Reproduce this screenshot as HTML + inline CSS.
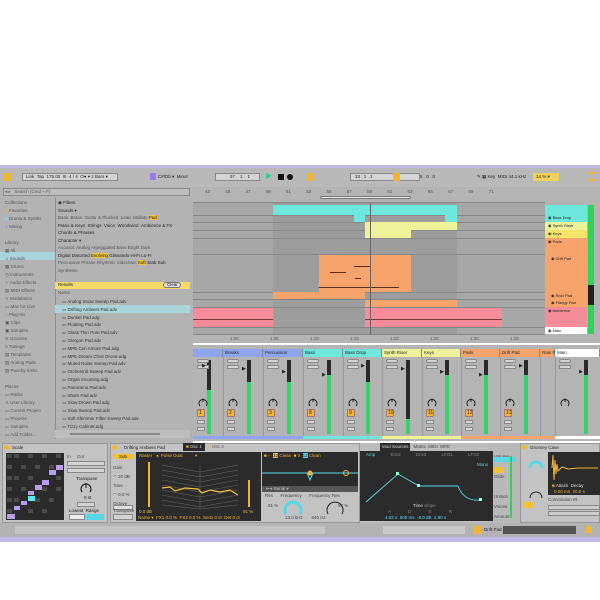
<!DOCTYPE html>
<html><head><meta charset="utf-8"><style>
*{margin:0;padding:0;box-sizing:border-box}
body{width:600px;height:600px;background:#fff;position:relative;overflow:hidden;font-family:"Liberation Sans",sans-serif;font-size:4.5px;color:#222}
.a{position:absolute}
.t{position:absolute;white-space:nowrap;line-height:1}
.bx{position:absolute;background:#d4d4d4;border:1px solid #8a8a8a}
</style></head><body>
<!-- frame -->
<div class="a" style="left:0;top:165px;width:600px;height:3px;background:#c3b9e8"></div>
<div class="a" style="left:0;top:537px;width:600px;height:5px;background:#c3b9e8"></div>
<!-- toolbar -->
<div class="a" style="left:0;top:168px;width:600px;height:19px;background:#b9b9b9"></div>
<div class="a" style="left:4px;top:173px;width:8px;height:8px;background:#f2b632"></div>
<div class="bx" style="left:22px;top:173px;width:96px;height:8px"></div>
<div class="t" style="left:26px;top:175px">Link &nbsp;Tap &nbsp;175.00 &nbsp;III &nbsp;4 / 4 &nbsp;O● ▾ 2 Bars ▾</div>
<div class="a" style="left:150px;top:173px;width:6px;height:7px;background:#9a7cf0"></div>
<div class="t" style="left:158px;top:175px">C#/Db ▾ &nbsp;Minor</div>
<div class="bx" style="left:215px;top:173px;width:45px;height:8px"></div>
<div class="t" style="left:230px;top:175px">57 . &nbsp;1 . &nbsp;1</div>
<div class="t" style="left:266px;top:172px;color:#2ed28a;font-size:8px">▶</div>
<div class="a" style="left:278px;top:174px;width:6px;height:6px;background:#111"></div>
<div class="a" style="left:287px;top:174px;width:6px;height:6px;background:#111;border-radius:50%"></div>
<div class="a" style="left:308px;top:173px;width:6px;height:8px;background:#f2b632"></div>
<div class="bx" style="left:350px;top:173px;width:70px;height:8px"></div>
<div class="t" style="left:355px;top:175px">33 . 1 . 1</div>
<div class="a" style="left:393px;top:173px;width:7px;height:8px;background:#f2b632"></div>
<div class="t" style="left:420px;top:175px">5 . 0 . 0</div>
<div class="t" style="left:477px;top:175px">✎ ▦ Key &nbsp;MIDI 44.1 kHz</div>
<div class="a" style="left:533px;top:173px;width:26px;height:8px;background:#f0d25a"></div>
<div class="t" style="left:536px;top:175px">14 % ▾</div>
<div class="a" style="left:587px;top:172px;width:8px;height:9px;border-top:2px solid #f2b632;border-bottom:2px solid #f2b632"></div>
<!-- left sidebar + browser -->
<div class="a" style="left:0;top:187px;width:193px;height:256px;background:#b3b3b3"></div>
<div class="bx" style="left:3px;top:188px;width:187px;height:8px;background:#bdbdbd"></div>
<div class="t" style="left:5px;top:190px;color:#555">◂ ▸ &nbsp;&nbsp;Search (Cmd + F)</div>
<div class="a" style="left:55px;top:197px;width:1px;height:242px;background:#8e8e8e"></div>
<div class="a" style="left:0;top:252px;width:55px;height:8px;background:#a9d4dc"></div>
<div class="t" style="left:5px;top:199px;color:#555;line-height:8px">Collections<br><span style="color:#f2b632">■</span> Favorites<br><span style="color:#5ed">■</span> Drums &amp; Synths<br><span style="color:#a8e">■</span> Mixing<br><br>Library<br>▦ All<br>♫ Sounds<br>▦ Drums<br>◷ Instruments<br>⊹ Audio Effects<br>▤ MIDI Effects<br>∿ Modulators<br>▭ Max for Live<br>◌ Plug-Ins<br>▣ Clips<br>▣ Samples<br>≋ Grooves<br>≡ Tunings<br>▤ Templates<br>▥ Analog Pads<br>▥ Punchy Kicks<br><br>Places<br>▭ Packs<br>♙ User Library<br>▭ Current Project<br>▭ Projects<br>▭ Samples<br>▭ Add Folder...</div>
<div class="t" style="left:58px;top:199px;line-height:7.5px">◉ Filters<br>Sounds ▾<br><span style="color:#555">Bass &nbsp;Brass &nbsp;Guitar &amp; Plucked &nbsp;Lead &nbsp;Mallets </span><span style="background:#f2c232">Pad</span><br>Piano &amp; Keys &nbsp;Strings &nbsp;Voice &nbsp;Woodwind &nbsp;Ambience &amp; FX<br>Chords &amp; Phrases<br>Character ▾<br><span style="color:#555">Acoustic Analog Arpeggiated Bass Bright Dark</span><br>Digital Distorted <span style="background:#f2c232">Evolving</span> Glissando Hi-Fi Lo-Fi<br><span style="color:#555">Percussive Phrase Rhythmic Sidechain </span><span style="background:#f2c232">Soft</span> Stab Sub<br><span style="color:#555">Synthesis</span><br><br>Genres ▾</div>
<div class="a" style="left:55px;top:282px;width:135px;height:7px;background:#f5da6a"></div>
<div class="t" style="left:58px;top:283px">Results</div>
<div class="a" style="left:163px;top:282px;width:18px;height:6px;border:1px solid #777;border-radius:3px;background:#ddd"></div>
<div class="t" style="left:167px;top:283px">Clear</div>
<div class="t" style="left:58px;top:291px;color:#555">Name</div>
<div class="a" style="left:55px;top:305px;width:135px;height:8px;background:#a9d4dc"></div>
<div class="t" style="left:62px;top:298px;line-height:7.8px;color:#333">▭ Analog Snow Sweep Pad.adv<br>▭ Drifting Ambient Pad.adv<br>▭ Dunkel Pad.adg<br>▭ Floating Pad.adv<br>▭ Glass Thin Pure Pad.adv<br>▭ Glorgon Pad.adv<br>▭ MPE Con Amore Pad.adg<br>▭ MPE Dream Choir Drone.adg<br>▭ Muted Noise Sweep Pad.adv<br>▭ Orchestral Sweep Pad.adv<br>▭ Organ Incoming.adg<br>▭ Panorama Pad.adv<br>▭ Sham Pad.adv<br>▭ Slow Drown Pad.adg<br>▭ Slow Swoop Pad.adv<br>▭ Soft Shimmer Filter Sweep Pad.adv<br>▭ Tizzy Cabinet.adg</div>
<div class="a" style="left:55px;top:430px;width:135px;height:8px;background:#bdbdbd"></div>
<div class="a" style="left:70px;top:433px;width:90px;height:2px;background:#888"></div>
<!-- arrangement -->
<div class="a" style="left:193px;top:187px;width:352px;height:156px;background:#a7a7a7"></div>
<div class="a" style="left:193px;top:187px;width:352px;height:16px;background:#b4b4b4;border-bottom:1px solid #888"></div>
<div class="t" style="left:205px;top:190px;color:#555;word-spacing:14px">43 45 47 49 51 53 55 57 59 61 63 65 67 69 71</div>
<div class="a" style="left:320px;top:196px;width:91px;height:3px;border:1px solid #777;border-radius:2px;background:#eee"></div>
<div class="a" style="left:273px;top:203px;width:184px;height:132px;background:#9d9d9d"></div>
<div class="a" style="left:193px;top:215px;width:352px;height:1px;background:#888"></div>
<div class="a" style="left:193px;top:222px;width:352px;height:1px;background:#888"></div>
<div class="a" style="left:193px;top:230px;width:352px;height:1px;background:#888"></div>
<div class="a" style="left:193px;top:238px;width:352px;height:1px;background:#888"></div>
<div class="a" style="left:193px;top:254px;width:352px;height:1px;background:#888"></div>
<div class="a" style="left:193px;top:292px;width:352px;height:1px;background:#888"></div>
<div class="a" style="left:193px;top:299px;width:352px;height:1px;background:#888"></div>
<div class="a" style="left:193px;top:307px;width:352px;height:1px;background:#888"></div>
<div class="a" style="left:193px;top:327px;width:352px;height:1px;background:#888"></div>
<div class="a" style="left:193px;top:334px;width:352px;height:9px;background:#b4b4b4;border-top:1px solid #888"></div>
<div class="t" style="left:230px;top:337px;color:#555;word-spacing:30px">1:00 1:05 1:10 1:15 1:20 1:25 1:30 1:35</div>
<div class="a" style="left:273px;top:205px;width:184px;height:10px;background:#6ee8dd"></div>
<div class="a" style="left:354px;top:215px;width:11px;height:7px;background:#6ee8dd"></div>
<div class="a" style="left:445px;top:215px;width:12px;height:7px;background:#6ee8dd"></div>
<div class="a" style="left:365px;top:222px;width:92px;height:8px;background:#eef39a"></div>
<div class="a" style="left:365px;top:230px;width:46px;height:8px;background:#eef39a"></div>
<div class="a" style="left:319px;top:255px;width:92px;height:37px;background:#f6a46c"></div>
<div class="a" style="left:330px;top:272px;width:16px;height:1px;background:#5a3018"></div>
<div class="a" style="left:354px;top:266px;width:16px;height:1px;background:#5a3018"></div>
<div class="a" style="left:355px;top:278px;width:6px;height:1px;background:#5a3018"></div>
<div class="a" style="left:319px;top:287px;width:80px;height:1px;background:#5a3018"></div>
<div class="a" style="left:273px;top:292px;width:92px;height:7px;background:#f6a46c"></div>
<div class="a" style="left:365px;top:300px;width:92px;height:7px;background:#f6a46c"></div>
<div class="a" style="left:193px;top:308px;width:80px;height:19px;background:#f58c9a"></div>
<div class="a" style="left:365px;top:308px;width:137px;height:19px;background:#f58c9a"></div>
<div class="a" style="left:193px;top:319px;width:80px;height:1px;background:#7a3a40"></div>
<div class="a" style="left:365px;top:319px;width:137px;height:1px;background:#7a3a40"></div>
<div class="a" style="left:370px;top:203px;width:1px;height:132px;background:#666"></div>
<!-- track headers -->
<div class="a" style="left:545px;top:187px;width:55px;height:156px;background:#b4b4b4"></div>
<div class="a" style="left:545px;top:205px;width:42px;height:10px;background:#6ee8dd"></div>
<div class="a" style="left:545px;top:215px;width:42px;height:7px;background:#6ee8dd"></div>
<div class="a" style="left:545px;top:222px;width:42px;height:8px;background:#eef39a"></div>
<div class="a" style="left:545px;top:230px;width:42px;height:8px;background:#f2e56a"></div>
<div class="a" style="left:545px;top:238px;width:42px;height:16px;background:#f6a46c"></div>
<div class="a" style="left:545px;top:254px;width:42px;height:38px;background:#f6a46c"></div>
<div class="a" style="left:545px;top:292px;width:42px;height:7px;background:#f6a46c"></div>
<div class="a" style="left:545px;top:299px;width:42px;height:8px;background:#f6a46c"></div>
<div class="a" style="left:545px;top:307px;width:42px;height:20px;background:#f58c9a"></div>
<div class="a" style="left:545px;top:327px;width:42px;height:7px;background:#fff"></div>
<div class="t" style="left:548px;top:216px;font-size:4px">◉ Bass Drop</div>
<div class="t" style="left:548px;top:224px;font-size:4px">◉ Synth Riser</div>
<div class="t" style="left:548px;top:232px;font-size:4px">◉ Keys</div>
<div class="t" style="left:548px;top:240px;font-size:4px">◉ Pads</div>
<div class="t" style="left:551px;top:257px;font-size:4px">◉ Drift Pad</div>
<div class="t" style="left:551px;top:294px;font-size:4px">◉ Rain Pad</div>
<div class="t" style="left:551px;top:301px;font-size:4px">◉ Flangy Pad</div>
<div class="t" style="left:548px;top:309px;font-size:4px">◉ Ambience</div>
<div class="t" style="left:548px;top:329px;font-size:4px">◉ Main</div>
<div class="a" style="left:588px;top:205px;width:6px;height:129px;background:#2fd35a"></div>
<div class="a" style="left:588px;top:285px;width:6px;height:20px;background:#222"></div>
<!-- mixer -->
<div class="a" style="left:193px;top:345px;width:407px;height:96px;background:#b4b4b4"></div>
<div id="mx"></div>
<!-- devices -->
<div class="a" style="left:0;top:443px;width:600px;height:80px;background:#b9b9b9"></div>
<div class="a" style="left:2px;top:443px;width:106px;height:80px;background:#c3c3c3;border:1px solid #999"></div>
<div class="a" style="left:4px;top:445px;width:5px;height:5px;border-radius:50%;background:#f2b632"></div>
<div class="t" style="left:12px;top:446px">Scale</div>
<div class="a" style="left:6px;top:453px;width:58px;height:67px;background:#2a2a2a"></div>
<svg class="a" style="left:6px;top:453px" width="58" height="67">
<g fill="#4a4a4a">
<rect x="1" y="1" width="5" height="4"/><rect x="8" y="1" width="5" height="4"/><rect x="22" y="1" width="5" height="4"/><rect x="36" y="1" width="5" height="4"/><rect x="50" y="1" width="5" height="4"/>
<rect x="1" y="12" width="5" height="4"/><rect x="15" y="12" width="5" height="4"/><rect x="29" y="12" width="5" height="4"/><rect x="43" y="12" width="5" height="4"/>
<rect x="1" y="23" width="5" height="4"/><rect x="8" y="23" width="5" height="4"/><rect x="22" y="23" width="5" height="4"/><rect x="50" y="23" width="5" height="4"/>
<rect x="1" y="34" width="5" height="4"/><rect x="15" y="34" width="5" height="4"/><rect x="36" y="34" width="5" height="4"/><rect x="50" y="34" width="5" height="4"/>
<rect x="1" y="45" width="5" height="4"/><rect x="8" y="45" width="5" height="4"/><rect x="29" y="45" width="5" height="4"/><rect x="43" y="45" width="5" height="4"/>
<rect x="1" y="56" width="5" height="4"/><rect x="22" y="56" width="5" height="4"/><rect x="36" y="56" width="5" height="4"/>
</g>
<g fill="#b79cf2"><rect x="50" y="12" width="7" height="5"/><rect x="43" y="17" width="7" height="5"/><rect x="36" y="27" width="7" height="5"/><rect x="29" y="32" width="7" height="5"/><rect x="22" y="38" width="6" height="4"/><rect x="15" y="48" width="6" height="4"/><rect x="8" y="53" width="6" height="4"/><rect x="1" y="61" width="8" height="5"/></g>
<rect x="22" y="43" width="7" height="5" fill="#5ee5f0"/>
</svg>
<div class="t" style="left:67px;top:455px;color:#555">In &nbsp;&nbsp;&nbsp;&nbsp;Out</div>
<div class="bx" style="left:67px;top:461px;width:38px;height:5px"></div>
<div class="bx" style="left:67px;top:468px;width:38px;height:5px"></div>
<div class="t" style="left:76px;top:477px">Transpose</div>
<svg class="a" style="left:79px;top:482px" width="14" height="12"><path d="M3 10 A5 5 0 1 1 11 10" fill="none" stroke="#222" stroke-width="1.2"/><line x1="7" y1="6" x2="7" y2="1" stroke="#222"/></svg>
<div class="t" style="left:84px;top:496px">0 st</div>
<div class="bx" style="left:77px;top:502px;width:18px;height:5px"></div>
<div class="t" style="left:69px;top:509px">Lowest &nbsp;Range</div>
<div class="bx" style="left:69px;top:514px;width:16px;height:6px;background:#eee"></div>
<div class="a" style="left:86px;top:514px;width:18px;height:6px;background:#55d8e8"></div>
<!-- synth device -->
<div class="a" style="left:110px;top:443px;width:250px;height:80px;background:#c3c3c3;border:1px solid #999"></div>
<div class="a" style="left:112px;top:445px;width:5px;height:5px;border-radius:50%;background:#f2b632"></div>
<div class="t" style="left:124px;top:446px">Drifting Ambient Pad</div>
<div class="a" style="left:183px;top:443px;width:22px;height:8px;background:#2a2a2a"></div>
<div class="t" style="left:186px;top:445px;color:#ddd"><span style="color:#f2b632">■</span> Osc 1</div>
<div class="t" style="left:208px;top:445px;color:#555"><span style="color:#f2b632">□</span> Osc 2</div>
<div class="a" style="left:113px;top:454px;width:20px;height:5px;background:#f2c232"></div>
<div class="t" style="left:119px;top:455px">Sub</div>
<div class="t" style="left:113px;top:463px;line-height:9px;color:#444">Gain<br>◠ 20 dB<br>Tone<br>◠ 0.0 %<br>Octave</div>
<div class="a" style="left:113px;top:505px;width:20px;height:5px;background:#ddd;border:1px solid #888"></div>
<div class="t" style="left:113px;top:509px;color:#444">Transpose</div>
<div class="bx" style="left:113px;top:514px;width:20px;height:6px"></div>
<div class="a" style="left:136px;top:452px;width:125px;height:69px;background:#2b2b2b"></div>
<div class="t" style="left:139px;top:454px;color:#f2b632">Raster &nbsp;&nbsp;◂ &nbsp;Pulse Dual &nbsp;&nbsp;&nbsp;&nbsp;&nbsp;&nbsp;&nbsp;&nbsp;&nbsp;▾</div>
<div class="a" style="left:148px;top:462px;width:2px;height:45px;background:#f2b632"></div>
<div class="a" style="left:248px;top:480px;width:2px;height:27px;background:#f2b632"></div>
<svg class="a" style="left:160px;top:460px" width="80" height="50">
<g stroke="#777" stroke-width=".4" fill="none">
<path d="M2 5 L40 12 L78 5"/><path d="M2 10 L40 17 L78 10"/><path d="M2 15 L40 22 L78 15"/><path d="M2 20 L40 27 L78 20"/><path d="M2 25 L40 32 L78 25"/><path d="M2 30 L40 37 L78 30"/><path d="M2 35 L40 42 L78 35"/><path d="M2 40 L40 47 L78 40"/><path d="M2 45 L40 49 L78 45"/><line x1="40" y1="5" x2="40" y2="49"/></g>
<path d="M2 28 L10 27 L15 31 L25 28 L38 29 L42 33 L50 30 L60 32 L70 30 L78 35" stroke="#f2c232" stroke-width="1.2" fill="none"/>
</svg>
<div class="t" style="left:139px;top:510px;color:#f2b632">0.0 dB</div>
<div class="t" style="left:243px;top:510px;color:#f2b632">51 %</div>
<div class="t" style="left:138px;top:516px;color:#f2b632">Name ▾ &nbsp;FX1 0.0 % &nbsp;FX2 0.0 % &nbsp;Semi 0 st &nbsp;Det 0 ct</div>
<div class="a" style="left:262px;top:452px;width:96px;height:34px;background:#2b2b2b"></div>
<div class="t" style="left:264px;top:454px;color:#f2b632">■ ⌐ &nbsp;<span style="background:#f2b632;color:#222">12</span> Clean &nbsp;■ \/ &nbsp;<span style="background:#55d8e8;color:#222">12</span> Clean</div>
<svg class="a" style="left:262px;top:462px" width="96" height="24"><path d="M0 11 L45 11 L48 18 L51 11 L96 11" stroke="#55d8e8" fill="none" stroke-width="1"/><circle cx="48" cy="11" r="2.5" fill="#f2b632"/><circle cx="84" cy="11" r="2.5" fill="none" stroke="#f2b632"/></svg>
<div class="a" style="left:262px;top:486px;width:96px;height:6px;background:#555"></div>
<div class="t" style="left:266px;top:487px;color:#ccc">⟷ Serial ▾</div>
<div class="t" style="left:265px;top:494px;color:#444">Res &nbsp;&nbsp;&nbsp;&nbsp;&nbsp;Frequency &nbsp;&nbsp;&nbsp;&nbsp;&nbsp;Frequency Res</div>
<svg class="a" style="left:283px;top:498px" width="70" height="18"><path d="M3 16 A8 8 0 1 1 17 16" fill="none" stroke="#55d8e8" stroke-width="3"/><path d="M45 16 A8 8 0 1 1 59 16" fill="none" stroke="#222" stroke-width="1"/></svg>
<div class="t" style="left:268px;top:504px;color:#444">81 %</div><div class="t" style="left:338px;top:504px;color:#444">57 %</div>
<div class="t" style="left:285px;top:516px;color:#444">13.0 kHz &nbsp;&nbsp;&nbsp;&nbsp;&nbsp;&nbsp;640 Hz</div>
<!-- mod -->
<div class="a" style="left:360px;top:443px;width:128px;height:80px;background:#bdbdbd"></div>
<div class="a" style="left:380px;top:443px;width:30px;height:8px;background:#2b2b2b"></div>
<div class="t" style="left:382px;top:445px;color:#ddd">Mod Sources &nbsp;&nbsp;&nbsp;<span style="color:#444">Matrix &nbsp;MIDI &nbsp;MPE</span></div>
<div class="a" style="left:360px;top:451px;width:133px;height:70px;background:#2b2b2b"></div>
<div class="t" style="left:366px;top:453px;color:#888;word-spacing:14px"><span style="color:#55d8e8">Amp</span> Env2 Env3 LFO1 LFO2</div>
<div class="t" style="left:477px;top:463px;color:#55d8e8">Mono</div>
<svg class="a" style="left:364px;top:462px" width="126" height="42"><path d="M2 40 L34 12 L55 24 L94 24 Q100 40 117 38" stroke="#55d8e8" fill="none" stroke-width=".9"/><g fill="#9fc" ><rect x="32" y="10" width="3" height="3"/><rect x="53" y="22" width="3" height="3"/><rect x="115" y="36" width="3" height="3"/></g></svg>
<div class="t" style="left:413px;top:504px;color:#ddd">Time <span style="color:#888">Slope</span></div>
<div class="t" style="left:388px;top:510px;color:#888;word-spacing:16px">A D S R</div>
<div class="t" style="left:385px;top:516px;color:#55d8e8">4.82 s &nbsp;800 ms &nbsp;-8.0 dB &nbsp;2.90 s</div>
<div class="t" style="left:494px;top:452px;color:#444;line-height:10px">Volume<br><br>Glide<br><br>Unison<br>Voices<br>Amount</div>
<div class="a" style="left:494px;top:457px;width:22px;height:5px;background:#55d8e8"></div>
<div class="a" style="left:494px;top:467px;width:10px;height:6px;background:#f2c232"></div>
<div class="a" style="left:510px;top:456px;width:2px;height:62px;background:#2fd35a"></div>
<!-- gnomey -->
<div class="a" style="left:520px;top:443px;width:80px;height:80px;background:#c3c3c3;border:1px solid #999"></div>
<div class="a" style="left:522px;top:445px;width:5px;height:5px;border-radius:50%;background:#f2b632"></div>
<div class="t" style="left:530px;top:446px">Gnomey Cave</div>
<svg class="a" style="left:525px;top:452px" width="22" height="60"><path d="M5 16 A6 6 0 1 1 17 16" fill="none" stroke="#55d8e8" stroke-width="3"/><path d="M5 46 A6 6 0 1 1 17 46" fill="none" stroke="#222"/></svg>
<div class="a" style="left:548px;top:452px;width:52px;height:43px;background:#2b2b2b"></div>
<svg class="a" style="left:548px;top:452px" width="52" height="32"><path d="M4 16 L5 3 L6 28 L7 8 L8 22 L9 12 L10 19 L14 15 L20 17 L30 16 L50 16" stroke="#f2b632" fill="none"/></svg>
<div class="t" style="left:552px;top:484px;color:#ddd"><span style="color:#f2b632">■</span> Attack &nbsp;Decay</div>
<div class="t" style="left:554px;top:490px;color:#f2b632">0.00 ms &nbsp;20.0 s</div>
<div class="a" style="left:524px;top:502px;width:10px;height:6px;background:#f2c232"></div>
<div class="t" style="left:548px;top:498px;color:#444">Convolution IR</div>
<div class="bx" style="left:548px;top:505px;width:52px;height:5px;background:#ccc"></div>
<div class="bx" style="left:548px;top:511px;width:52px;height:5px;background:#ccc"></div>
<!-- status bar -->
<div class="a" style="left:0;top:523px;width:600px;height:14px;background:#b3b3b3"></div>
<div class="a" style="left:15px;top:526px;width:310px;height:8px;background:#c4c4c4"></div>
<div class="a" style="left:383px;top:526px;width:82px;height:8px;background:#c9c9c9"></div>
<div class="a" style="left:473px;top:526px;width:8px;height:8px;background:#f2b632"></div>
<div class="t" style="left:484px;top:528px">Drift Pad</div>
<div class="a" style="left:503px;top:526px;width:73px;height:8px;background:#555"></div>
<div class="a" style="left:586px;top:526px;width:6px;height:7px;background:#f2b632"></div>
<script>
var ch=[["",193,30,"#8fa6ef"],["Breaks",223,40,"#8fa6ef"],["Percussion",263,40,"#8fa6ef"],["Bass",303,40,"#6ee8dd"],["Bass Drop",343,39,"#6ee8dd"],["Synth Riser",382,40,"#eef39a"],["Keys",422,39,"#eef39a"],["Pads",461,39,"#f6a46c"],["Drift Pad",500,40,"#f6a46c"],["Rain P",540,15,"#f6a46c"],["Main",555,45,"#ffffff"]];
var nums=["1","2","3","8","9","10","11","12","13","14",""],lv=[.6,.7,.7,.8,.7,.2,.8,.8,.8,.8,.8];
var h="";
ch.forEach(function(c,i){var x=c[1],w=c[2];
h+='<div class="a" style="left:'+x+'px;top:349px;width:'+w+'px;height:8px;background:'+c[3]+';border-right:1px solid #888"></div>';
h+='<div class="t" style="left:'+(x+2)+'px;top:351px">'+c[0]+'</div>';
h+='<div class="a" style="left:'+(x+w)+'px;top:357px;width:1px;height:80px;background:#999"></div>';
h+='<div class="a" style="left:'+(x+w)+'px;top:436px;width:1px;height:0"></div>';
h+='<div class="a" style="left:'+x+'px;top:436px;width:'+w+'px;height:3px;background:'+c[3]+'"></div>';
if(w>20){var m=x+w-16;
h+='<div class="a" style="left:'+m+'px;top:360px;width:4px;height:74px;background:#2a2a2a"></div>';
h+='<div class="a" style="left:'+m+'px;top:'+(360+74*(1-lv[i]))+'px;width:4px;height:'+(74*lv[i])+'px;background:#35d36a"></div>';
h+='<div class="bx" style="left:'+(x+4)+'px;top:359px;width:12px;height:4px;border-radius:2px"></div>';
h+='<div class="bx" style="left:'+(x+4)+'px;top:365px;width:12px;height:4px"></div>';
h+='<div class="t" style="left:'+(m-5)+'px;top:'+(364+i%4*3)+'px;font-size:5px">▶</div>';
h+='<svg class="a" style="left:'+(x+5)+'px;top:398px" width="10" height="9"><path d="M2 8 A4 4 0 1 1 8 8" fill="none" stroke="#222"/><line x1="5" y1="4" x2="5" y2="0.5" stroke="#222"/></svg>';
if(nums[i]){h+='<div class="a" style="left:'+(x+4)+'px;top:409px;width:8px;height:8px;background:#f2b632;border:1px solid #a77"></div><div class="t" style="left:'+(x+6)+'px;top:411px;font-size:5px">'+nums[i]+'</div>';
h+='<div class="bx" style="left:'+(x+4)+'px;top:420px;width:8px;height:4px"></div><div class="bx" style="left:'+(x+4)+'px;top:427px;width:8px;height:4px"></div>';}
}});
document.getElementById("mx").outerHTML=h;
</script>
</body></html>
